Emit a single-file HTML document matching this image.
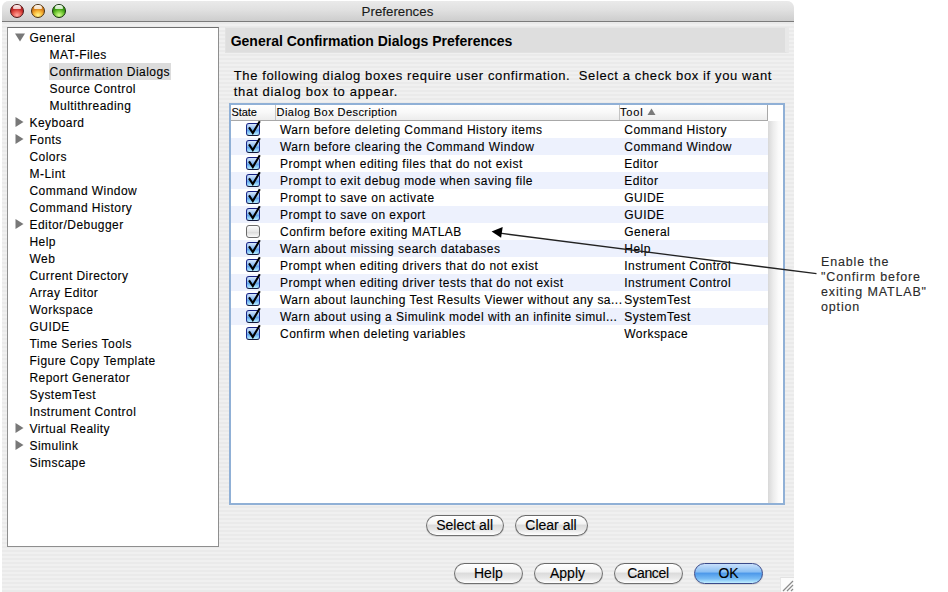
<!DOCTYPE html>
<html><head><meta charset="utf-8"><style>
html,body{margin:0;padding:0;}
body{width:948px;height:592px;position:relative;overflow:hidden;background:#fff;font-family:"Liberation Sans",sans-serif;color:#000;}
div{box-sizing:border-box;}
.tx{position:absolute;white-space:nowrap;-webkit-text-stroke:0.12px currentColor;}
.a{position:absolute;}
#win{left:2px;top:1px;width:792px;height:600px;border-radius:7px 7px 0 0;
 background:repeating-linear-gradient(to bottom,#f0f0f0 0px,#f0f0f0 2px,#eaeaea 2px,#eaeaea 4px);background-position:0 -1px;}
#title{left:2px;top:1px;width:792px;height:21px;border-radius:7px 7px 0 0;background:linear-gradient(to bottom,#eaeaea 0%,#e0e0e0 45%,#cdcdcd 100%);border-bottom:1px solid #7b7b7b;}
.light{position:absolute;width:14px;height:14px;border-radius:50%;}
#tree{left:7px;top:27px;width:212px;height:520px;background:#fff;border:1px solid #8e8e8e;border-top-color:#6f6f6f;}
#hdr{left:225px;top:27px;width:564px;height:26px;background:#dedede;border:1px solid #e2e2e2;border-right:4px solid #e8e8e8;border-top-color:#e6e6e6;}
#tbl{left:229px;top:103px;width:556px;height:402px;border:2px solid #90b0d6;background:#fff;}
.row{position:absolute;left:231px;width:537px;height:17px;}
.odd{background:#edf1fd;}
.cb{position:absolute;left:246px;width:14px;height:13px;border-radius:3px;}
.cbon{border:1px solid #1a2a8c;border-top:1.5px solid #141f80;border-bottom-color:#10183a;background:linear-gradient(to bottom,#d4e6fb 0%,#94c0f2 40%,#64a6ec 58%,#9ad8fc 85%,#b8ecff 100%);}
.cboff{border:1px solid #6a6a6a;background:linear-gradient(to bottom,#fdfdfd 0%,#e6e6e6 50%,#dadada 55%,#fafafa 100%);}
.btn{position:absolute;height:21px;border-radius:11px;border:1px solid #707070;border-top-color:#6a6a6a;box-shadow:0 1px 1px rgba(0,0,0,0.12);
 background:linear-gradient(to bottom,#ffffff 0%,#f4f4f4 40%,#dcdcdc 50%,#e8e8e8 75%,#ffffff 100%);}
.ok{border-color:#3a4a8a;background:linear-gradient(to bottom,#c9e0fb 0%,#8cc0f4 40%,#4f9aea 50%,#78bcf5 78%,#c3f0ff 100%);}
</style></head><body>
<div id="win" class="a"></div>
<div id="title" class="a"></div>
<div class="tx " style="left:361.60px;top:4.54px;font-size:13.3px;line-height:13.3px;color:#1a1a1a;">Preferences</div>
<div class="light" style="left:10px;top:4px;background:radial-gradient(ellipse 60% 55% at 50% 85%,#ffa8a0 0%,#e85a50 60%,#c02828 100%);border:1px solid #4a1414;"></div>
<div class="a" style="left:13px;top:5px;width:8px;height:4px;border-radius:4px 4px 1px 1px;background:linear-gradient(to bottom,#fff 0%,#f4d8d8 100%);opacity:0.9"></div>
<div class="light" style="left:31px;top:4px;background:radial-gradient(ellipse 60% 55% at 50% 85%,#fff890 0%,#f8b838 60%,#d8801c 100%);border:1px solid #4a3010;"></div>
<div class="a" style="left:34px;top:5px;width:8px;height:4px;border-radius:4px 4px 1px 1px;background:linear-gradient(to bottom,#fff 0%,#f6ecdc 100%);opacity:0.9"></div>
<div class="light" style="left:52px;top:4px;background:radial-gradient(ellipse 60% 55% at 50% 85%,#d8ff98 0%,#78cc38 60%,#3c9a14 100%);border:1px solid #10300a;"></div>
<div class="a" style="left:55px;top:5px;width:8px;height:4px;border-radius:4px 4px 1px 1px;background:linear-gradient(to bottom,#fff 0%,#e0f0d8 100%);opacity:0.9"></div>
<div id="tree" class="a"></div>
<div class="a" style="left:49px;top:63px;width:122px;height:17px;background:#dcdcdc;"></div>
<div class="tx " style="left:29.50px;top:31.84px;font-size:12px;line-height:12px;letter-spacing:0.45px;">General</div>
<svg class="a" style="left:14px;top:33px" width="12" height="10"><polygon points="1,0.5 11,0.5 6,8.5" fill="#787878"/></svg>
<div class="tx " style="left:49.60px;top:48.84px;font-size:12px;line-height:12px;letter-spacing:0.45px;">MAT-Files</div>
<div class="tx " style="left:49.60px;top:65.84px;font-size:12px;line-height:12px;letter-spacing:0.45px;">Confirmation Dialogs</div>
<div class="tx " style="left:49.60px;top:82.84px;font-size:12px;line-height:12px;letter-spacing:0.45px;">Source Control</div>
<div class="tx " style="left:49.60px;top:99.84px;font-size:12px;line-height:12px;letter-spacing:0.45px;">Multithreading</div>
<div class="tx " style="left:29.50px;top:116.84px;font-size:12px;line-height:12px;letter-spacing:0.45px;">Keyboard</div>
<svg class="a" style="left:15px;top:116px" width="10" height="12"><polygon points="0.5,1 8.5,6 0.5,11" fill="#787878"/></svg>
<div class="tx " style="left:29.50px;top:133.84px;font-size:12px;line-height:12px;letter-spacing:0.45px;">Fonts</div>
<svg class="a" style="left:15px;top:133px" width="10" height="12"><polygon points="0.5,1 8.5,6 0.5,11" fill="#787878"/></svg>
<div class="tx " style="left:29.50px;top:150.84px;font-size:12px;line-height:12px;letter-spacing:0.45px;">Colors</div>
<div class="tx " style="left:29.50px;top:167.84px;font-size:12px;line-height:12px;letter-spacing:0.45px;">M-Lint</div>
<div class="tx " style="left:29.50px;top:184.84px;font-size:12px;line-height:12px;letter-spacing:0.45px;">Command Window</div>
<div class="tx " style="left:29.50px;top:201.84px;font-size:12px;line-height:12px;letter-spacing:0.45px;">Command History</div>
<div class="tx " style="left:29.50px;top:218.84px;font-size:12px;line-height:12px;letter-spacing:0.45px;">Editor/Debugger</div>
<svg class="a" style="left:15px;top:218px" width="10" height="12"><polygon points="0.5,1 8.5,6 0.5,11" fill="#787878"/></svg>
<div class="tx " style="left:29.50px;top:235.84px;font-size:12px;line-height:12px;letter-spacing:0.45px;">Help</div>
<div class="tx " style="left:29.50px;top:252.84px;font-size:12px;line-height:12px;letter-spacing:0.45px;">Web</div>
<div class="tx " style="left:29.50px;top:269.84px;font-size:12px;line-height:12px;letter-spacing:0.45px;">Current Directory</div>
<div class="tx " style="left:29.50px;top:286.84px;font-size:12px;line-height:12px;letter-spacing:0.45px;">Array Editor</div>
<div class="tx " style="left:29.50px;top:303.84px;font-size:12px;line-height:12px;letter-spacing:0.45px;">Workspace</div>
<div class="tx " style="left:29.50px;top:320.84px;font-size:12px;line-height:12px;letter-spacing:0.45px;">GUIDE</div>
<div class="tx " style="left:29.50px;top:337.84px;font-size:12px;line-height:12px;letter-spacing:0.45px;">Time Series Tools</div>
<div class="tx " style="left:29.50px;top:354.84px;font-size:12px;line-height:12px;letter-spacing:0.45px;">Figure Copy Template</div>
<div class="tx " style="left:29.50px;top:371.84px;font-size:12px;line-height:12px;letter-spacing:0.45px;">Report Generator</div>
<div class="tx " style="left:29.50px;top:388.84px;font-size:12px;line-height:12px;letter-spacing:0.45px;">SystemTest</div>
<div class="tx " style="left:29.50px;top:405.84px;font-size:12px;line-height:12px;letter-spacing:0.45px;">Instrument Control</div>
<div class="tx " style="left:29.50px;top:422.84px;font-size:12px;line-height:12px;letter-spacing:0.45px;">Virtual Reality</div>
<svg class="a" style="left:15px;top:422px" width="10" height="12"><polygon points="0.5,1 8.5,6 0.5,11" fill="#787878"/></svg>
<div class="tx " style="left:29.50px;top:439.84px;font-size:12px;line-height:12px;letter-spacing:0.45px;">Simulink</div>
<svg class="a" style="left:15px;top:439px" width="10" height="12"><polygon points="0.5,1 8.5,6 0.5,11" fill="#787878"/></svg>
<div class="tx " style="left:29.50px;top:456.84px;font-size:12px;line-height:12px;letter-spacing:0.45px;">Simscape</div>
<div id="hdr" class="a"></div>
<div class="tx " style="left:230.70px;top:33.95px;font-size:14px;line-height:14px;font-weight:bold;-webkit-text-stroke:0;">General Confirmation Dialogs Preferences</div>
<div class="tx " style="left:233.80px;top:68.60px;font-size:13px;line-height:13px;letter-spacing:0.61px;">The following dialog boxes require user confirmation.&nbsp; Select a check box if you want</div>
<div class="tx " style="left:233.80px;top:85.10px;font-size:13px;line-height:13px;letter-spacing:0.7px;">that dialog box to appear.</div>
<div id="tbl" class="a"></div>
<div class="a" style="left:231px;top:105px;width:537px;height:16px;background:linear-gradient(to bottom,#ffffff 0%,#f8f8f8 50%,#ececec 100%);border-bottom:1px solid #a8a8a8;border-right:1px solid #a8a8a8;"></div>
<div class="a" style="left:275px;top:105px;width:1px;height:15px;background:#c4c4c4;"></div>
<div class="a" style="left:619px;top:105px;width:1px;height:15px;background:#c4c4c4;"></div>
<div class="tx " style="left:231.60px;top:107.29px;font-size:11px;line-height:11px;letter-spacing:-0.1px;">State</div>
<div class="tx " style="left:276.60px;top:107.29px;font-size:11px;line-height:11px;letter-spacing:0.43px;">Dialog Box Description</div>
<div class="tx " style="left:620.00px;top:107.29px;font-size:11px;line-height:11px;letter-spacing:0.8px;">Tool</div>
<svg class="a" style="left:647px;top:108px" width="9" height="8"><polygon points="4.5,0.5 8.5,7 0.5,7" fill="#7a7a7a"/></svg>
<div class="a" style="left:768px;top:121px;width:15px;height:382px;background:linear-gradient(to right,#d8d8d8 0%,#ececec 35%,#fafafa 70%,#ffffff 100%);"></div>
<div class="row odd" style="top:138px"></div>
<div class="row odd" style="top:172px"></div>
<div class="row odd" style="top:206px"></div>
<div class="row odd" style="top:240px"></div>
<div class="row odd" style="top:274px"></div>
<div class="row odd" style="top:308px"></div>
<div class="tx " style="left:280.00px;top:123.54px;font-size:12px;line-height:12px;letter-spacing:0.48px;">Warn before deleting Command History items</div>
<div class="tx " style="left:624.30px;top:123.54px;font-size:12px;line-height:12px;letter-spacing:0.45px;">Command History</div>
<div class="cb cbon" style="top:123px"></div>
<svg class="a" style="left:247px;top:120px" width="14" height="15"><path d="M2,7.3 L5.8,13 L12.8,1.2" fill="none" stroke="#000" stroke-width="2.1" stroke-linejoin="miter" stroke-linecap="butt"/></svg>
<div class="tx " style="left:280.00px;top:140.54px;font-size:12px;line-height:12px;letter-spacing:0.48px;">Warn before clearing the Command Window</div>
<div class="tx " style="left:624.30px;top:140.54px;font-size:12px;line-height:12px;letter-spacing:0.45px;">Command Window</div>
<div class="cb cbon" style="top:140px"></div>
<svg class="a" style="left:247px;top:137px" width="14" height="15"><path d="M2,7.3 L5.8,13 L12.8,1.2" fill="none" stroke="#000" stroke-width="2.1" stroke-linejoin="miter" stroke-linecap="butt"/></svg>
<div class="tx " style="left:280.00px;top:157.54px;font-size:12px;line-height:12px;letter-spacing:0.48px;">Prompt when editing files that do not exist</div>
<div class="tx " style="left:624.30px;top:157.54px;font-size:12px;line-height:12px;letter-spacing:0.45px;">Editor</div>
<div class="cb cbon" style="top:157px"></div>
<svg class="a" style="left:247px;top:154px" width="14" height="15"><path d="M2,7.3 L5.8,13 L12.8,1.2" fill="none" stroke="#000" stroke-width="2.1" stroke-linejoin="miter" stroke-linecap="butt"/></svg>
<div class="tx " style="left:280.00px;top:174.54px;font-size:12px;line-height:12px;letter-spacing:0.48px;">Prompt to exit debug mode when saving file</div>
<div class="tx " style="left:624.30px;top:174.54px;font-size:12px;line-height:12px;letter-spacing:0.45px;">Editor</div>
<div class="cb cbon" style="top:174px"></div>
<svg class="a" style="left:247px;top:171px" width="14" height="15"><path d="M2,7.3 L5.8,13 L12.8,1.2" fill="none" stroke="#000" stroke-width="2.1" stroke-linejoin="miter" stroke-linecap="butt"/></svg>
<div class="tx " style="left:280.00px;top:191.54px;font-size:12px;line-height:12px;letter-spacing:0.48px;">Prompt to save on activate</div>
<div class="tx " style="left:624.30px;top:191.54px;font-size:12px;line-height:12px;letter-spacing:0.45px;">GUIDE</div>
<div class="cb cbon" style="top:191px"></div>
<svg class="a" style="left:247px;top:188px" width="14" height="15"><path d="M2,7.3 L5.8,13 L12.8,1.2" fill="none" stroke="#000" stroke-width="2.1" stroke-linejoin="miter" stroke-linecap="butt"/></svg>
<div class="tx " style="left:280.00px;top:208.54px;font-size:12px;line-height:12px;letter-spacing:0.48px;">Prompt to save on export</div>
<div class="tx " style="left:624.30px;top:208.54px;font-size:12px;line-height:12px;letter-spacing:0.45px;">GUIDE</div>
<div class="cb cbon" style="top:208px"></div>
<svg class="a" style="left:247px;top:205px" width="14" height="15"><path d="M2,7.3 L5.8,13 L12.8,1.2" fill="none" stroke="#000" stroke-width="2.1" stroke-linejoin="miter" stroke-linecap="butt"/></svg>
<div class="tx " style="left:280.00px;top:225.54px;font-size:12px;line-height:12px;letter-spacing:0.48px;">Confirm before exiting MATLAB</div>
<div class="tx " style="left:624.30px;top:225.54px;font-size:12px;line-height:12px;letter-spacing:0.45px;">General</div>
<div class="cb cboff" style="top:225px"></div>
<div class="tx " style="left:280.00px;top:242.54px;font-size:12px;line-height:12px;letter-spacing:0.48px;">Warn about missing search databases</div>
<div class="tx " style="left:624.30px;top:242.54px;font-size:12px;line-height:12px;letter-spacing:0.45px;">Help</div>
<div class="cb cbon" style="top:242px"></div>
<svg class="a" style="left:247px;top:239px" width="14" height="15"><path d="M2,7.3 L5.8,13 L12.8,1.2" fill="none" stroke="#000" stroke-width="2.1" stroke-linejoin="miter" stroke-linecap="butt"/></svg>
<div class="tx " style="left:280.00px;top:259.54px;font-size:12px;line-height:12px;letter-spacing:0.48px;">Prompt when editing drivers that do not exist</div>
<div class="tx " style="left:624.30px;top:259.54px;font-size:12px;line-height:12px;letter-spacing:0.45px;">Instrument Control</div>
<div class="cb cbon" style="top:259px"></div>
<svg class="a" style="left:247px;top:256px" width="14" height="15"><path d="M2,7.3 L5.8,13 L12.8,1.2" fill="none" stroke="#000" stroke-width="2.1" stroke-linejoin="miter" stroke-linecap="butt"/></svg>
<div class="tx " style="left:280.00px;top:276.54px;font-size:12px;line-height:12px;letter-spacing:0.48px;">Prompt when editing driver tests that do not exist</div>
<div class="tx " style="left:624.30px;top:276.54px;font-size:12px;line-height:12px;letter-spacing:0.45px;">Instrument Control</div>
<div class="cb cbon" style="top:276px"></div>
<svg class="a" style="left:247px;top:273px" width="14" height="15"><path d="M2,7.3 L5.8,13 L12.8,1.2" fill="none" stroke="#000" stroke-width="2.1" stroke-linejoin="miter" stroke-linecap="butt"/></svg>
<div class="tx " style="left:280.00px;top:293.54px;font-size:12px;line-height:12px;letter-spacing:0.48px;">Warn about launching Test Results Viewer without any sa...</div>
<div class="tx " style="left:624.30px;top:293.54px;font-size:12px;line-height:12px;letter-spacing:0.45px;">SystemTest</div>
<div class="cb cbon" style="top:293px"></div>
<svg class="a" style="left:247px;top:290px" width="14" height="15"><path d="M2,7.3 L5.8,13 L12.8,1.2" fill="none" stroke="#000" stroke-width="2.1" stroke-linejoin="miter" stroke-linecap="butt"/></svg>
<div class="tx " style="left:280.00px;top:310.54px;font-size:12px;line-height:12px;letter-spacing:0.48px;">Warn about using a Simulink model with an infinite simul...</div>
<div class="tx " style="left:624.30px;top:310.54px;font-size:12px;line-height:12px;letter-spacing:0.45px;">SystemTest</div>
<div class="cb cbon" style="top:310px"></div>
<svg class="a" style="left:247px;top:307px" width="14" height="15"><path d="M2,7.3 L5.8,13 L12.8,1.2" fill="none" stroke="#000" stroke-width="2.1" stroke-linejoin="miter" stroke-linecap="butt"/></svg>
<div class="tx " style="left:280.00px;top:327.54px;font-size:12px;line-height:12px;letter-spacing:0.48px;">Confirm when deleting variables</div>
<div class="tx " style="left:624.30px;top:327.54px;font-size:12px;line-height:12px;letter-spacing:0.45px;">Workspace</div>
<div class="cb cbon" style="top:327px"></div>
<svg class="a" style="left:247px;top:324px" width="14" height="15"><path d="M2,7.3 L5.8,13 L12.8,1.2" fill="none" stroke="#000" stroke-width="2.1" stroke-linejoin="miter" stroke-linecap="butt"/></svg>
<div class="btn " style="left:426px;top:515px;width:78px;"></div>
<div class="tx " style="left:436.20px;top:518.45px;font-size:14px;line-height:14px;">Select all</div>
<div class="btn " style="left:515px;top:515px;width:73px;"></div>
<div class="tx " style="left:525.30px;top:518.45px;font-size:14px;line-height:14px;">Clear all</div>
<div class="btn " style="left:454px;top:563px;width:69px;"></div>
<div class="btn " style="left:534px;top:563px;width:69px;"></div>
<div class="btn " style="left:614px;top:563px;width:69px;"></div>
<div class="btn ok" style="left:694px;top:563px;width:69px;"></div>
<div class="tx " style="left:474.00px;top:566.45px;font-size:14px;line-height:14px;">Help</div>
<div class="tx " style="left:550.00px;top:566.45px;font-size:14px;line-height:14px;">Apply</div>
<div class="tx " style="left:627.20px;top:566.45px;font-size:14px;line-height:14px;letter-spacing:-0.35px;">Cancel</div>
<div class="tx " style="left:718.40px;top:566.45px;font-size:14px;line-height:14px;">OK</div>
<div class="a" style="left:780px;top:577px;width:14px;height:15px;background:#fbfbfb;border-top:1px solid #e2e2e2;border-left:1px solid #e6e6e6;"></div>
<svg class="a" style="left:780px;top:577px" width="14" height="15"><path d="M3,14 L13,4 M7,14 L13,8 M11,14 L13,12" stroke="#8a8a8a" stroke-width="1.2" fill="none"/></svg>
<svg class="a" style="left:0;top:0" width="948" height="592"><line x1="500" y1="233.2" x2="816.5" y2="273.7" stroke="#222" stroke-width="1.3"/><polygon points="491.6,231.4 502.7,227.1 501.1,237.7" fill="#000"/></svg>
<div class="tx " style="left:821.00px;top:256.02px;font-size:12.5px;line-height:12.5px;letter-spacing:0.85px;color:#2a2a2a;">Enable the</div>
<div class="tx " style="left:821.00px;top:270.92px;font-size:12.5px;line-height:12.5px;letter-spacing:0.85px;color:#2a2a2a;">"Confirm before</div>
<div class="tx " style="left:821.00px;top:285.82px;font-size:12.5px;line-height:12.5px;letter-spacing:0.85px;color:#2a2a2a;">exiting MATLAB"</div>
<div class="tx " style="left:821.00px;top:300.72px;font-size:12.5px;line-height:12.5px;letter-spacing:0.85px;color:#2a2a2a;">option</div>
</body></html>
